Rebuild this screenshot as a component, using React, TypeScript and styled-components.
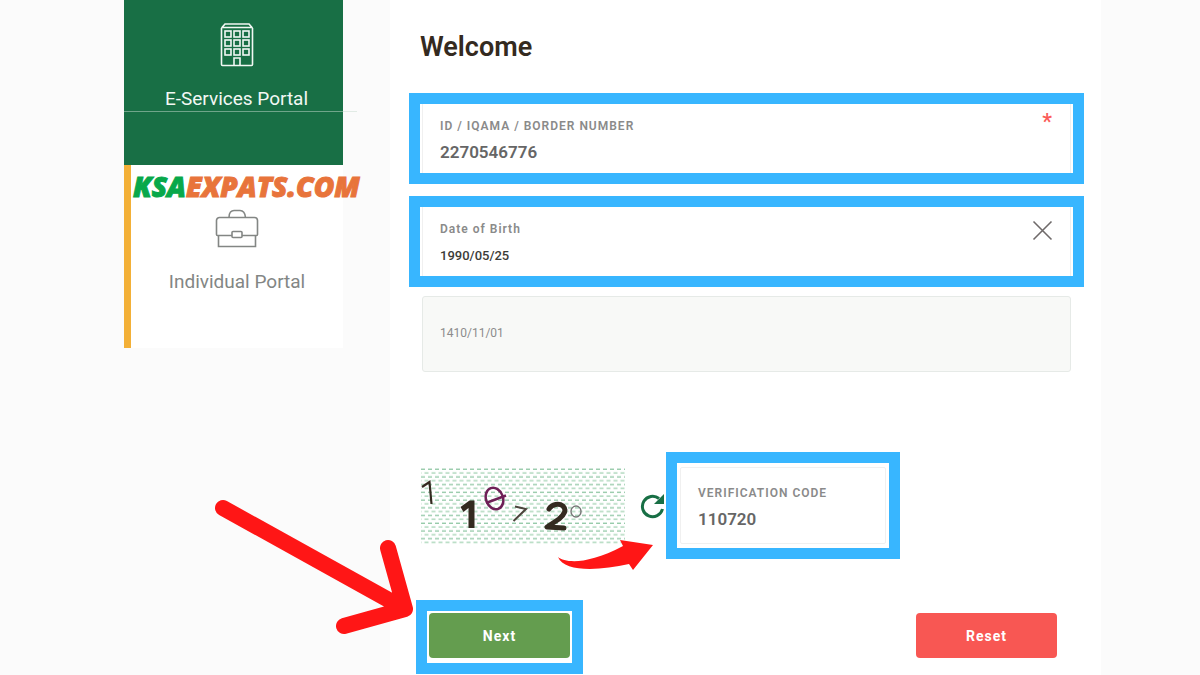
import React from "react";
import styled, { createGlobalStyle } from "styled-components";

const GlobalStyle = createGlobalStyle`
  *, *::before, *::after { box-sizing: border-box; }
  body {
    margin: 0;
    background: #fbfbfb;
    color: #342a20;
    font-family: Roboto, "Liberation Sans", sans-serif;
  }
  input, button { font-family: inherit; }
`;

const Page = styled.div`
  display: grid;
  grid-template-columns: 219px minmax(0, 1fr);
  column-gap: 47px;
  min-height: 100vh;
  padding: 0 99px 0 124px;
`;

const Sidebar = styled.nav`
  position: relative;
`;

const PortalLink = styled.a<{ $active?: boolean }>`
  display: flex;
  flex-direction: column;
  align-items: center;
  gap: ${(p) => (p.$active ? 20 : 22)}px;
  height: ${(p) => (p.$active ? 165 : 183)}px;
  padding-top: ${(p) => (p.$active ? 22 : 44)}px;
  padding-left: ${(p) => (p.$active ? 6 : 0)}px;
  border-left: ${(p) => (p.$active ? "0" : "7px solid #f3b037")};
  background: ${(p) => (p.$active ? "#186f45" : "#ffffff")};
  color: ${(p) => (p.$active ? "#f2f8f4" : "#838684")};
  font-size: 19px;
  line-height: 24px;
  text-decoration: none;
`;

const Divider = styled.hr`
  position: absolute;
  top: 111px;
  left: 0;
  right: -14px;
  height: 1px;
  margin: 0;
  border: 0;
  background: rgba(200, 220, 208, 0.5);
`;

const SiteMark = styled.a`
  position: absolute;
  z-index: 1;
  top: 168px;
  left: 9px;
  color: #e8743b;
  font-family: "Open Sans", "Liberation Sans", sans-serif;
  font-size: 28px;
  font-style: italic;
  font-weight: 800;
  line-height: 36px;
  text-decoration: none;
  white-space: nowrap;
  -webkit-text-stroke: 1px currentColor;
`;

const SiteMarkLead = styled.span`
  color: #08a84a;
`;

const Main = styled.main`
  position: relative;
  padding: 28px 17px 0 19px;
  background: #ffffff;
`;

const Title = styled.h1`
  margin: 0 0 27px 11px;
  font-size: 27px;
  font-weight: 600;
  line-height: 38px;
`;

const Highlight = styled.div`
  border: 11px solid #38b6ff;
  background: #ffffff;
`;

const FieldFrame = styled(Highlight)`
  margin-bottom: 12px;
  padding: 0 2px;
`;

const CodeFrame = styled(Highlight)`
  flex: 0 0 234px;
  padding: 4px 3px;
`;

const NextFrame = styled(Highlight)`
  padding: 2px 2px 5px;
`;

const Field = styled.div<{ $boxed?: boolean }>`
  position: relative;
  display: flex;
  flex-direction: column;
  gap: 4px;
  height: ${(p) => (p.$boxed ? 77 : 69)}px;
  padding: ${(p) => (p.$boxed ? 17 : 14)}px 17px 0;
  border: 1px solid #f0f0f0;
  border-width: ${(p) => (p.$boxed ? "1px" : "0 1px")};
  border-radius: ${(p) => (p.$boxed ? 2 : 0)}px;
`;

const Label = styled.label`
  color: #8a8a8a;
  font-size: 12px;
  font-weight: 600;
  letter-spacing: 1px;
  line-height: 16px;
`;

const TextInput = styled.input<{ $small?: boolean }>`
  width: 100%;
  height: 28px;
  padding: 0;
  border: 0;
  outline: 0;
  background: transparent;
  color: ${(p) => (p.$small ? "#3c3c38" : "#666666")};
  font-size: ${(p) => (p.$small ? 13 : 17)}px;
  font-weight: ${(p) => (p.$small ? 500 : 600)};
`;

const Required = styled.span`
  position: absolute;
  top: 6px;
  right: 18px;
  color: #fb5b58;
  font-size: 22px;
  font-weight: 500;
  line-height: 24px;
`;

const ClearButton = styled.button`
  position: absolute;
  top: 13px;
  right: 17px;
  width: 21px;
  height: 21px;
  padding: 0;
  border: 0;
  background: none;
  color: #6f6a6a;
`;

const HijriInput = styled.input`
  display: block;
  width: calc(100% - 26px);
  height: 76px;
  margin: -3px 13px 80px;
  padding: 0 17px 3px;
  border: 1px solid #e6eae7;
  border-radius: 3px;
  background: #f8f9f7;
  color: #8c8c8c;
  font-size: 12px;
`;

const CaptchaRow = styled.div`
  display: flex;
  align-items: center;
  margin: 0 0 41px 12px;
`;

const RefreshButton = styled.button`
  flex: 0 0 26px;
  height: 26px;
  margin-left: 15px;
  padding: 0;
  border: 0;
  background: none;
  color: #186f45;
`;

const Actions = styled.div`
  display: flex;
  align-items: flex-start;
  justify-content: space-between;
  padding: 0 27px 0 7px;
`;

const ActionButton = styled.button<{ $tone: string }>`
  display: block;
  width: 141px;
  height: 45px;
  border: 0;
  border-radius: 4px;
  background: ${(p) => p.$tone};
  color: #ffffff;
  font-size: 14px;
  font-weight: 700;
  letter-spacing: 1px;
`;

const ResetButton = styled(ActionButton)`
  margin-top: 13px;
`;

const LongArrow = styled.svg`
  position: absolute;
  top: 490px;
  left: -180px;
  pointer-events: none;
`;

const CurvedArrow = styled.svg`
  position: absolute;
  top: 536px;
  left: 166px;
  pointer-events: none;
`;

const BuildingIcon = () => (
  <svg width="34" height="45" viewBox="0 0 34 45" fill="none" stroke="currentColor" strokeWidth="1.6" aria-hidden="true">
    <path d="M1.500 6v36.500a1 1 0 0 0 1 1h29a1 1 0 0 0 1-1V6M1.500 6 5 2h24l3.500 4M2 5.500h30" />
    {[9, 18, 27].map((y) =>
      [5, 14, 23].map((x) => <rect key={`${x}-${y}`} x={x} y={y} width="6" height="6" />)
    )}
    <path d="M14 43v-7h6v7" />
  </svg>
);

const BriefcaseIcon = () => (
  <svg width="44" height="39" viewBox="0 0 44 39" fill="none" stroke="currentColor" strokeWidth="1.6" aria-hidden="true">
    <path d="M14 8.500C14 3.500 16.500 1.500 19 1.500h6c3 0 5 2 5.500 7" />
    <path d="M17 26.500H2.500a1 1 0 0 1-1-1V11.500a3 3 0 0 1 3-3h35a3 3 0 0 1 3 3v14a1 1 0 0 1-1 1H27" />
    <path d="M3.500 26.500v11h37v-11" />
    <rect x="17" y="22.500" width="10" height="6" rx="1" />
  </svg>
);

const Captcha = () => (
  <svg width="204" height="76" viewBox="0 0 204 76" role="img" aria-label="Verification code image">
    <defs>
      <pattern id="dashes" width="7" height="7.72" patternUnits="userSpaceOnUse">
        <path d="M0 1.200h4" stroke="#85c29b" strokeWidth="1.200" />
        <path d="M3.500 5.060H7M0 5.060h.5" stroke="#9dcfae" strokeWidth="1.200" />
      </pattern>
    </defs>
    <rect width="204" height="76" fill="url(#dashes)" />
    <path d="M1 19 8.500 14 10.500 36" fill="none" stroke="#342a20" strokeWidth="2.200" />
    <path d="M39.500 39 48.500 32.500h5V60h-6V40l-5 4z" fill="#342a20" />
    <g fill="none" stroke="#6e2057" strokeWidth="2.500">
      <ellipse cx="73.500" cy="30.500" rx="8.500" ry="11" transform="rotate(-20 73.5 30.5)" />
      <path d="M65 35 85 27.500" />
    </g>
    <path d="M94 38.500 105 41 92.500 53" fill="none" stroke="#4c443c" strokeWidth="2" />
    <path d="M128 41c3-5 10-6 14-3 4 4 1 9-4 13l-12 8 17 1" fill="none" stroke="#342a20" strokeWidth="5" strokeLinecap="round" strokeLinejoin="round" />
    <ellipse cx="155" cy="43.500" rx="5" ry="5.500" fill="none" stroke="#777777" strokeWidth="1.400" />
  </svg>
);

export default function App() {
  return (
    <>
      <GlobalStyle />
      <Page>
        <Sidebar aria-label="Portals">
          <PortalLink href="#e-services" $active>
            <BuildingIcon />
            E-Services Portal
          </PortalLink>
          <PortalLink href="#individual">
            <BriefcaseIcon />
            Individual Portal
          </PortalLink>
          <Divider />
          <SiteMark href="#ksaexpats">
            <SiteMarkLead>KSA</SiteMarkLead>EXPATS.COM
          </SiteMark>
        </Sidebar>
        <Main>
          <Title>Welcome</Title>
          <form onSubmit={(e) => e.preventDefault()}>
            <FieldFrame>
              <Field>
                <Label htmlFor="id-number">ID / IQAMA / BORDER NUMBER</Label>
                <TextInput id="id-number" defaultValue="2270546776" />
                <Required>*</Required>
              </Field>
            </FieldFrame>
            <FieldFrame>
              <Field>
                <Label htmlFor="birth-date">Date of Birth</Label>
                <TextInput id="birth-date" $small defaultValue="1990/05/25" />
                <ClearButton type="button" aria-label="Clear date">
                  <svg width="21" height="21" viewBox="0 0 21 21" stroke="currentColor" strokeWidth="1.600">
                    <path d="m1.500 1.500 18 18m0-18-18 18" />
                  </svg>
                </ClearButton>
              </Field>
            </FieldFrame>
            <HijriInput aria-label="Hijri date of birth" defaultValue="1410/11/01" disabled />
            <CaptchaRow>
              <Captcha />
              <RefreshButton type="button" aria-label="Refresh code">
                <svg width="26" height="26" viewBox="0 0 26 26" fill="none" stroke="currentColor" strokeWidth="3">
                  <path d="M19 5.500A10.200 10.200 0 1 0 22.500 16" />
                  <path d="M24 1v10H14z" fill="currentColor" stroke="none" />
                </svg>
              </RefreshButton>
              <CodeFrame>
                <Field $boxed>
                  <Label htmlFor="code">VERIFICATION CODE</Label>
                  <TextInput id="code" defaultValue="110720" />
                </Field>
              </CodeFrame>
            </CaptchaRow>
            <Actions>
              <NextFrame>
                <ActionButton type="submit" $tone="#649d4f">Next</ActionButton>
              </NextFrame>
              <ResetButton type="reset" $tone="#f85753">Reset</ResetButton>
            </Actions>
          </form>
          <LongArrow width="210" height="150" viewBox="0 0 210 150" fill="none" stroke="#ff1616" strokeWidth="16" strokeLinecap="round" strokeLinejoin="round" aria-hidden="true">
            <path d="M13 18 195 119M178 58l17 61-61 17" />
          </LongArrow>
          <CurvedArrow width="100" height="38" viewBox="0 0 100 38" fill="#ff1616" aria-hidden="true">
            <path d="M2 21C10 27 31 29 67 10L64 4 97 9 77 34 73 28C42 35 8 36 2 21z" />
          </CurvedArrow>
        </Main>
      </Page>
    </>
  );
}
